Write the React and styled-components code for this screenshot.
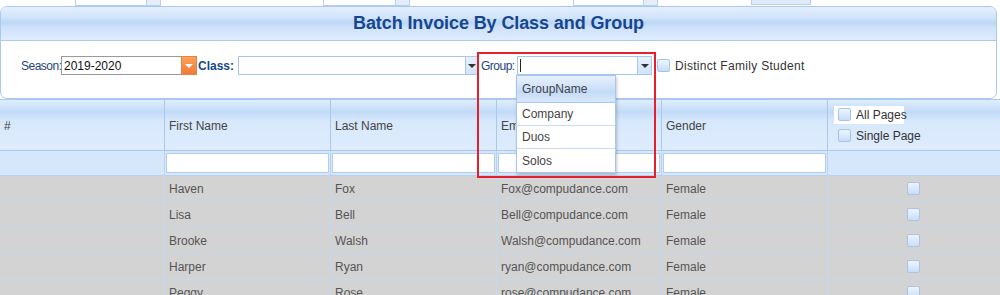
import React from "react";
import styled, { createGlobalStyle, css } from "styled-components";

const Global = createGlobalStyle`
  html, body { margin: 0; padding: 0; background: #fff; }
  body { width: 1000px; height: 295px; overflow: hidden; font-family: "Liberation Sans", Arial, sans-serif; }
  * { box-sizing: border-box; }
`;

const Page = styled.div`
  position: relative;
  width: 1000px;
  height: 295px;
  overflow: hidden;
`;

const TopStrip = styled.div`
  height: 6px;
  display: flex;
  align-items: flex-end;
  padding-left: 75px;
  overflow: hidden;
`;

const MiniCombo = styled.div`
  display: flex;
  height: 12px;
  margin-right: ${(p) => p.$gap}px;
  flex: none;
`;
const MiniInput = styled.div`
  width: ${(p) => p.$w}px;
  border: 1px solid #b8cfee;
  border-top: none;
  background: #fff;
`;
const MiniBtn = styled.div`
  width: 14px;
  border: 1px solid #b8cfee;
  border-left: none;
  border-top: none;
  background: #e3eefc;
`;
const MiniTab = styled.div`
  width: 60px;
  height: 12px;
  border: 1px solid #b3cdf0;
  background: #dfebfb;
  flex: none;
  margin-bottom: 1px;
`;

const Panel = styled.div`
  width: 997px;
  height: 93px;
  border: 1px solid #a9c8ee;
  border-radius: 7px;
  background: #fff;
  overflow: hidden;
`;

const PanelHeader = styled.div`
  height: 34px;
  border-bottom: 1px solid #a9c9ef;
  background: linear-gradient(
    to bottom,
    #e3effd 0%,
    #d3e5fb 30%,
    #bcd7f6 48%,
    #cfe2fa 62%,
    #deebfd 100%
  );
  display: flex;
  align-items: center;
  justify-content: center;
`;

const Title = styled.h1`
  margin: 0;
  font-family: "Liberation Sans", Arial, sans-serif;
  font-size: 18px;
  font-weight: bold;
  color: #15468f;
  letter-spacing: -0.1px;
`;

const FilterRow = styled.div`
  display: flex;
  align-items: center;
  height: 19px;
  margin-top: 15px;
  padding-left: 20px;
`;

const Label = styled.span`
  flex: none;
  width: ${(p) => p.$w}px;
  margin-left: ${(p) => p.$ml ?? 0}px;
  font-size: 12px;
  color: ${(p) => (p.$bold ? "#16488a" : "#24457a")};
  font-weight: ${(p) => (p.$bold ? "bold" : "normal")};
  letter-spacing: ${(p) => (p.$bold ? "0" : "-0.5px")};
  white-space: nowrap;
`;

const Combo = styled.div`
  display: flex;
  flex: none;
  height: 19px;
`;

const ComboInput = styled.div`
  width: ${(p) => p.$w}px;
  height: 19px;
  border: 1px solid ${(p) => (p.$dark ? "#9a9a9a" : "#a9c6ec")};
  border-right: none;
  background: #fff;
  font-size: 12px;
  color: #111;
  padding-left: 2px;
  display: flex;
  align-items: center;
`;

const Caret = styled.span`
  display: inline-block;
  width: 1px;
  height: 13px;
  background: #222;
`;

const ComboBtn = styled.div`
  width: ${(p) => p.$w ?? 15}px;
  height: 19px;
  display: flex;
  align-items: center;
  justify-content: center;
  ${(p) =>
    p.$orange
      ? css`
          background: linear-gradient(to bottom, #fba25a, #f07a37);
          border: 1px solid #e2834a;
        `
      : css`
          background: linear-gradient(to bottom, #e8f1fd, #d2e3f9);
          border: 1px solid #a9c6ec;
        `}
  &::after {
    content: "";
    border-left: 4px solid transparent;
    border-right: 4px solid transparent;
    border-top: 4px solid ${(p) => (p.$orange ? "#fff" : "#333")};
    margin-top: 1px;
  }
`;

const Check = styled.span`
  display: inline-block;
  flex: none;
  width: 13px;
  height: 13px;
  border: 1px solid #a7c4ea;
  border-radius: 2px;
  background: linear-gradient(to bottom, #eef5fe 0%, #dbe9fb 50%, #c8ddf7 100%);
  margin-left: ${(p) => p.$ml ?? 0}px;
  margin-right: ${(p) => p.$mr ?? 6}px;
`;

const CheckText = styled.span`
  font-size: 12px;
  color: #333;
  white-space: nowrap;
  letter-spacing: ${(p) => p.$ls ?? 0}px;
`;

const Grid = styled.div`
  width: 1000px;
  border-top: 1px solid #a9c8ee;
`;

const cols = "165px 166px 166px 165px 166px 172px";

const HeaderRow = styled.div`
  display: grid;
  grid-template-columns: ${cols};
  height: 51px;
  border-bottom: 1px solid #a9c8ee;
  background: linear-gradient(
    to bottom,
    #dfedfd 0%,
    #cfe3fb 14%,
    #c2daf7 24%,
    #d8e8fc 42%,
    #deecfd 100%
  );
`;

const HeadCell = styled.div`
  border-right: 1px solid #a9c8ee;
  font-size: 12px;
  color: #444;
  padding-left: 4px;
  display: flex;
  align-items: center;
  padding-top: 2px;
`;

const CheckHeadCell = styled.div`
  display: flex;
  flex-direction: column;
  justify-content: center;
  gap: 3px;
  padding-left: 6px;
`;

const CheckLine = styled.label`
  display: flex;
  align-items: center;
  height: 18px;
  width: ${(p) => (p.$hi ? "70px" : "auto")};
  background: ${(p) => (p.$hi ? "#fff" : "transparent")};
  padding-left: 4px;
`;

const FilterGridRow = styled.div`
  display: grid;
  grid-template-columns: ${cols};
  height: 25px;
  background: #d7e7fb;
  border-bottom: 1px solid #b8d2f2;
`;

const FilterCell = styled.div`
  border-right: ${(p) => (p.$last ? "none" : "1px solid #b9d3f2")};
  padding: 2px 1px;
`;

const FilterBox = styled.div`
  height: 20px;
  background: #fff;
  border: 1px solid #b3cdef;
`;

const DataRow = styled.div`
  display: grid;
  grid-template-columns: ${cols};
  height: 26px;
  background: #d3d3d3;
  border-bottom: 1px solid #c2d8f3;
`;

const DataCell = styled.div`
  border-right: 1px solid #c2d8f3;
  font-size: 12px;
  color: #555;
  padding-left: 4px;
  display: flex;
  align-items: center;
  &:last-child { border-right: none; }
`;

const DataCheckCell = styled(DataCell)`
  padding-left: 79px;
`;

const Dropdown = styled.div`
  position: absolute;
  left: 516px;
  top: 75px;
  width: 100px;
  background: #fff;
  border: 1px solid #a9c6ec;
  box-shadow: 1px 2px 3px rgba(0, 0, 0, 0.22);
  z-index: 2;
`;

const DropHead = styled.div`
  height: 27px;
  padding-left: 5px;
  display: flex;
  align-items: center;
  font-size: 12px;
  color: #444;
  border-bottom: 1px solid #a9c6ec;
  background: linear-gradient(
    to bottom,
    #e6f0fd 0%,
    #d2e4fb 40%,
    #c4dbf7 60%,
    #d8e8fc 100%
  );
`;

const DropItem = styled.div`
  height: 23px;
  padding-left: 5px;
  display: flex;
  align-items: center;
  font-size: 12px;
  color: #444;
  border-bottom: 1px solid #c7dbf4;
  &:last-child { border-bottom: none; }
`;

const Highlight = styled.div`
  position: absolute;
  left: 477px;
  top: 52px;
  width: 179px;
  height: 126px;
  border: 2.5px solid #e4202b;
  z-index: 3;
  pointer-events: none;
`;

const rows = [
  ["Haven", "Fox", "Fox@compudance.com", "Female"],
  ["Lisa", "Bell", "Bell@compudance.com", "Female"],
  ["Brooke", "Walsh", "Walsh@compudance.com", "Female"],
  ["Harper", "Ryan", "ryan@compudance.com", "Female"],
  ["Peggy", "Rose", "rose@compudance.com", "Female"],
];

export default function App() {
  return (
    <Page>
      <Global />
      <TopStrip>
        <MiniCombo $gap={162}>
          <MiniInput $w={72} />
          <MiniBtn />
        </MiniCombo>
        <MiniCombo $gap={163}>
          <MiniInput $w={73} />
          <MiniBtn />
        </MiniCombo>
        <MiniCombo $gap={93}>
          <MiniInput $w={71} />
          <MiniBtn />
        </MiniCombo>
        <MiniTab />
      </TopStrip>

      <Panel>
        <PanelHeader>
          <Title>Batch Invoice By Class and Group</Title>
        </PanelHeader>
        <FilterRow>
          <Label $w={40}>Season:</Label>
          <Combo>
            <ComboInput $w={120} $dark>2019-2020</ComboInput>
            <ComboBtn $orange $w={16} />
          </Combo>
          <Label $bold $w={40} $ml={1}>Class:</Label>
          <Combo>
            <ComboInput $w={227} />
            <ComboBtn $w={14} />
          </Combo>
          <Label $w={36} $ml={2}>Group:</Label>
          <Combo>
            <ComboInput $w={120}>
              <Caret />
            </ComboInput>
            <ComboBtn $w={15} />
          </Combo>
          <Check $ml={5} $mr={5} />
          <CheckText $ls={0.3}>Distinct Family Student</CheckText>
        </FilterRow>
      </Panel>

      <Grid>
        <HeaderRow>
          <HeadCell>#</HeadCell>
          <HeadCell>First Name</HeadCell>
          <HeadCell>Last Name</HeadCell>
          <HeadCell>Email</HeadCell>
          <HeadCell>Gender</HeadCell>
          <CheckHeadCell>
            <CheckLine $hi>
              <Check $mr={5} />
              <CheckText>All Pages</CheckText>
            </CheckLine>
            <CheckLine>
              <Check $mr={5} />
              <CheckText>Single Page</CheckText>
            </CheckLine>
          </CheckHeadCell>
        </HeaderRow>
        <FilterGridRow>
          <FilterCell />
          <FilterCell><FilterBox /></FilterCell>
          <FilterCell><FilterBox /></FilterCell>
          <FilterCell><FilterBox /></FilterCell>
          <FilterCell><FilterBox /></FilterCell>
          <FilterCell $last />
        </FilterGridRow>
        {rows.map((r, i) => (
          <DataRow key={i}>
            <DataCell />
            <DataCell>{r[0]}</DataCell>
            <DataCell>{r[1]}</DataCell>
            <DataCell>{r[2]}</DataCell>
            <DataCell>{r[3]}</DataCell>
            <DataCheckCell>
              <Check $mr={0} />
            </DataCheckCell>
          </DataRow>
        ))}
      </Grid>

      <Dropdown>
        <DropHead>GroupName</DropHead>
        <DropItem>Company</DropItem>
        <DropItem>Duos</DropItem>
        <DropItem>Solos</DropItem>
      </Dropdown>
      <Highlight />
    </Page>
  );
}
